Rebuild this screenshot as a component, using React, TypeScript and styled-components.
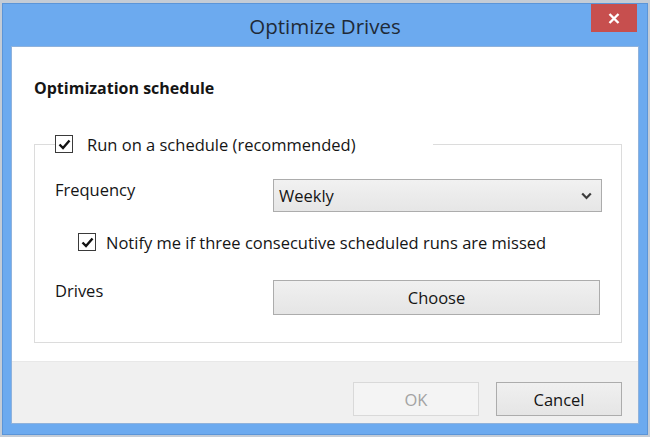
import React from 'react';
import styled, {createGlobalStyle} from 'styled-components';

const GlobalStyle = createGlobalStyle`
  html, body {
    margin: 0;
    padding: 0;
    background: #c4ccd6;
  }

  body {
    font-family: "Open Sans", "Noto Sans", sans-serif;
    color: #151515;
  }

  * {
    box-sizing: border-box;
  }
`;

const Check = () => (
    <svg width="13" height="11" viewBox="0 0 13 11">
        <path d="M1.5 5.5 L5 9 L11.5 1.5" fill="none" stroke="#111" strokeWidth="2.4"/>
    </svg>
);

const Checkbox = () => (
    <Box>
        <Check/>
    </Box>
);

const App = () => {
    return (
        <>
            <GlobalStyle/>
            <Window>
                <TitleBar>
                    <span/>
                    <Title>Optimize Drives</Title>
                    <Close aria-label="Close">
                        <svg width="12" height="11" viewBox="0 0 12 11">
                            <path d="M1.5 1 L10.5 10 M10.5 1 L1.5 10" stroke="#fff" strokeWidth="2.4"/>
                        </svg>
                    </Close>
                </TitleBar>
                <Client>
                    <Content>
                        <Heading>Optimization schedule</Heading>
                        <Group>
                            <Legend>
                                <Checkbox/>
                                <span>Run on a schedule (recommended)</span>
                            </Legend>
                            <Row>
                                <Label>Frequency</Label>
                                <Select>
                                    <span>Weekly</span>
                                    <svg width="11" height="8" viewBox="0 0 11 8">
                                        <path d="M1.2 1.5 L5.5 6 L9.8 1.5" fill="none" stroke="#3c3c3c" strokeWidth="2.2"/>
                                    </svg>
                                </Select>
                            </Row>
                            <NotifyRow>
                                <Checkbox/>
                                <span>Notify me if three consecutive scheduled runs are missed</span>
                            </NotifyRow>
                            <Row $gap={28} $height={35}>
                                <Label>Drives</Label>
                                <Button $wide>Choose</Button>
                            </Row>
                        </Group>
                    </Content>
                    <Footer>
                        <Button disabled>OK</Button>
                        <Button>Cancel</Button>
                    </Footer>
                </Client>
            </Window>
        </>
    )
}

const Window = styled.div`
  width: 646px;
  height: 432px;
  margin: 3px 0 0 2px;
  background: #6caaef;
  border: 1px solid #5b95d8;
  display: flex;
  flex-direction: column;
`;

const TitleBar = styled.div`
  height: 42px;
  display: grid;
  grid-template-columns: 1fr auto 1fr;
  align-items: center;
`;

const Title = styled.div`
  font-size: 20.5px;
  color: #1f2a38;
  padding-top: 1px;
`;

const Close = styled.button`
  justify-self: end;
  align-self: start;
  width: 46px;
  height: 28px;
  margin-right: 10px;
  border: none;
  padding: 0;
  background: #c74f4e;
  display: flex;
  align-items: center;
  justify-content: center;
`;

const Client = styled.div`
  flex: 1;
  margin: 0 8px 10px 8px;
  background: #fff;
  border: 1px solid #8fb2dc;
  display: flex;
  flex-direction: column;
`;

const Content = styled.div`
  flex: 1;
  padding: 30px 16px 0 22px;
`;

const Heading = styled.div`
  font-size: 16px;
  font-weight: 700;
  line-height: 22px;
  margin-bottom: 35px;
`;

const Group = styled.fieldset`
  margin: 0;
  width: 588px;
  border: 1px solid #dcdcdc;
  padding: 0 19px 27px 20px;
  font-size: 16.5px;
`;

const Legend = styled.legend`
  width: 378px;
  height: 20px;
  padding: 0;
  display: flex;
  align-items: center;
  gap: 14px;
`;

const Box = styled.span`
  width: 18px;
  height: 18px;
  border: 1px solid #3a3a3a;
  background: #fff;
  display: flex;
  align-items: center;
  justify-content: center;
  flex-shrink: 0;
`;

const Row = styled.div<{ $gap?: number; $height?: number }>`
  display: flex;
  align-items: center;
  height: ${p => p.$height || 33}px;
  margin-top: ${p => p.$gap || 25}px;
`;

const Label = styled.div`
  width: 218px;
  flex-shrink: 0;
  align-self: flex-start;
  line-height: 22px;
`;

const Select = styled.div`
  flex: 1;
  height: 33px;
  border: 1px solid #acacac;
  background: linear-gradient(#f1f1f1, #e6e6e6);
  display: flex;
  align-items: center;
  justify-content: space-between;
  padding: 0 9px 0 5px;
`;

const NotifyRow = styled.div`
  display: flex;
  align-items: center;
  gap: 10px;
  height: 20px;
  margin-top: 20px;
  padding-left: 23px;
`;

const Button = styled.button<{ $wide?: boolean }>`
  font-family: "Open Sans", "Noto Sans", sans-serif;
  font-size: 16.5px;
  color: #151515;
  width: ${p => p.$wide ? 'auto' : '126px'};
  flex: ${p => p.$wide ? '1' : 'none'};
  margin-right: ${p => p.$wide ? '2px' : '0'};
  height: ${p => p.$wide ? '35px' : '34px'};
  padding: 0;
  border: 1px solid #acacac;
  background: linear-gradient(#f0f0f0, #e5e5e5);

  &:disabled {
    color: #a3a3a3;
    border-color: #d9d9d9;
    background: #f4f4f4;
  }
`;

const Footer = styled.div`
  height: 62px;
  background: #f0f0f0;
  border-top: 1px solid #e8e8e8;
  display: flex;
  justify-content: flex-end;
  align-items: flex-start;
  gap: 17px;
  padding: 20px 16px 0 0;
`;

export default App;
